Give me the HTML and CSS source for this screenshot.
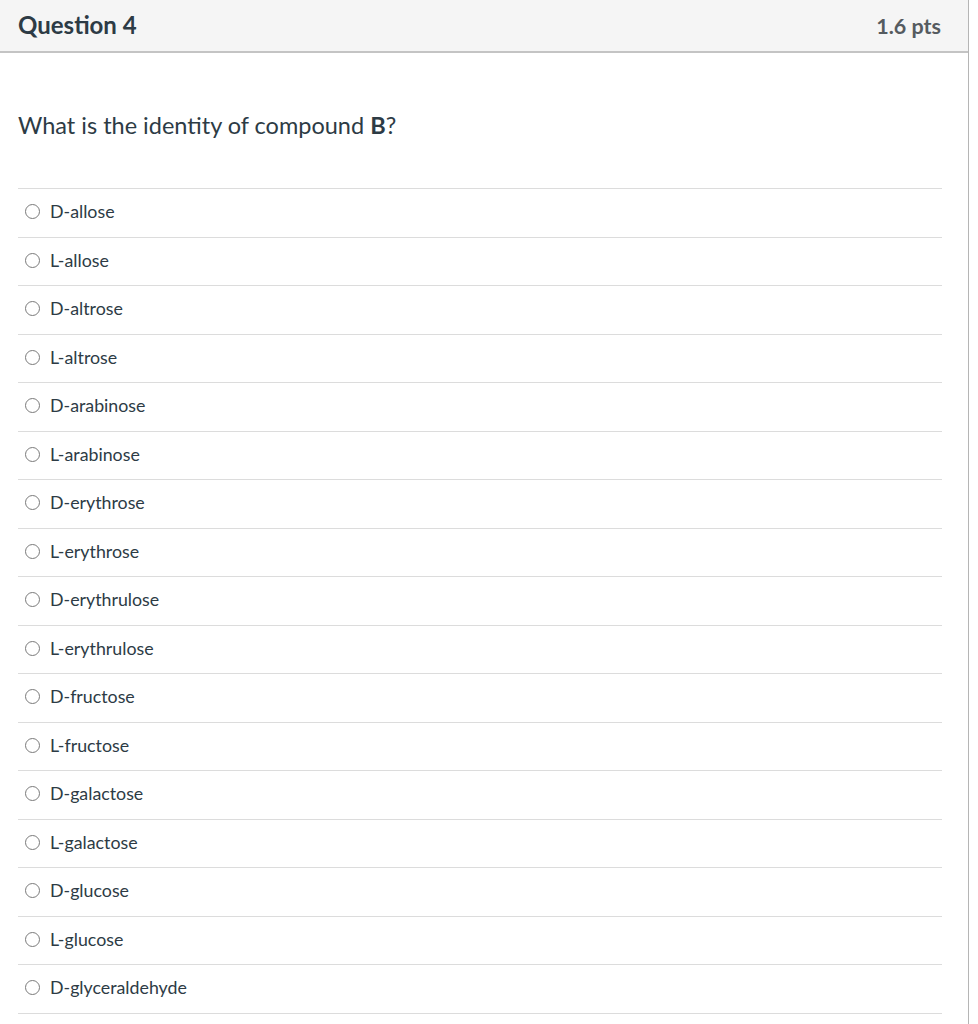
FILE: index.html
```html
<!DOCTYPE html>
<html>
<head>
<meta charset="utf-8">
<link rel="stylesheet" href="styles.css">
</head>
<body>
<div class="card">
  <div class="header">
    <div class="title">Question 4</div>
    <div class="pts">1.6 pts</div>
  </div>
  <div class="body">
    <p class="question">What is the identity of compound <b>B</b>?</p>
    <div class="answers">
      <div class="answer"><span class="radio"></span><span>D-allose</span></div>
      <div class="answer"><span class="radio"></span><span>L-allose</span></div>
      <div class="answer"><span class="radio"></span><span>D-altrose</span></div>
      <div class="answer"><span class="radio"></span><span>L-altrose</span></div>
      <div class="answer"><span class="radio"></span><span>D-arabinose</span></div>
      <div class="answer"><span class="radio"></span><span>L-arabinose</span></div>
      <div class="answer"><span class="radio"></span><span>D-erythrose</span></div>
      <div class="answer"><span class="radio"></span><span>L-erythrose</span></div>
      <div class="answer"><span class="radio"></span><span>D-erythrulose</span></div>
      <div class="answer"><span class="radio"></span><span>L-erythrulose</span></div>
      <div class="answer"><span class="radio"></span><span>D-fructose</span></div>
      <div class="answer"><span class="radio"></span><span>L-fructose</span></div>
      <div class="answer"><span class="radio"></span><span>D-galactose</span></div>
      <div class="answer"><span class="radio"></span><span>L-galactose</span></div>
      <div class="answer"><span class="radio"></span><span>D-glucose</span></div>
      <div class="answer"><span class="radio"></span><span>L-glucose</span></div>
      <div class="answer"><span class="radio"></span><span>D-glyceraldehyde</span></div>
    </div>
  </div>
</div>
</body>
</html>
```

FILE: styles.css
```css
html, body {
  margin: 0;
  padding: 0;
  background: #fff;
}
body {
  font-family: Lato, "Open Sans", sans-serif;
  color: #2d3b45;
}
.card {
  width: 968px;
  border-right: 1px solid #b5b5b5;
  height: 1024px;
  overflow: hidden;
}
.header {
  height: 51px;
  background: #f5f5f5;
  border-bottom: 2px solid #c4c4c4;
  display: flex;
  align-items: center;
  justify-content: space-between;
  padding: 0 27px 0 18px;
}
.title {
  font-weight: 700;
  font-size: 24px;
  line-height: 28px;
  color: #2d3b45;
  margin-top: -2px;
}
.pts {
  font-weight: 700;
  font-size: 21.5px;
  line-height: 26px;
  color: #555b60;
  margin-top: 1px;
}
.body {
  padding: 0 26px 0 18px;
}
.question {
  margin: 0;
  padding-top: 56px;
  height: 79px;
  font-size: 23.5px;
  line-height: 32px;
}
.question b {
  font-weight: 700;
}
.answers {
  border-top: 1px solid #dcdcdc;
}
.answer {
  height: 48.5px;
  box-sizing: border-box;
  border-bottom: 1px solid #dcdcdc;
  display: flex;
  align-items: center;
  font-size: 17.8px;
  line-height: 22px;
  padding-bottom: 3px;
}
.radio {
  width: 13px;
  height: 13px;
  border: 1px solid #7a7a7a;
  border-radius: 50%;
  margin-left: 7px;
  margin-right: 10px;
  margin-top: 1px;
  flex: none;
  background: #fff;
}
```
